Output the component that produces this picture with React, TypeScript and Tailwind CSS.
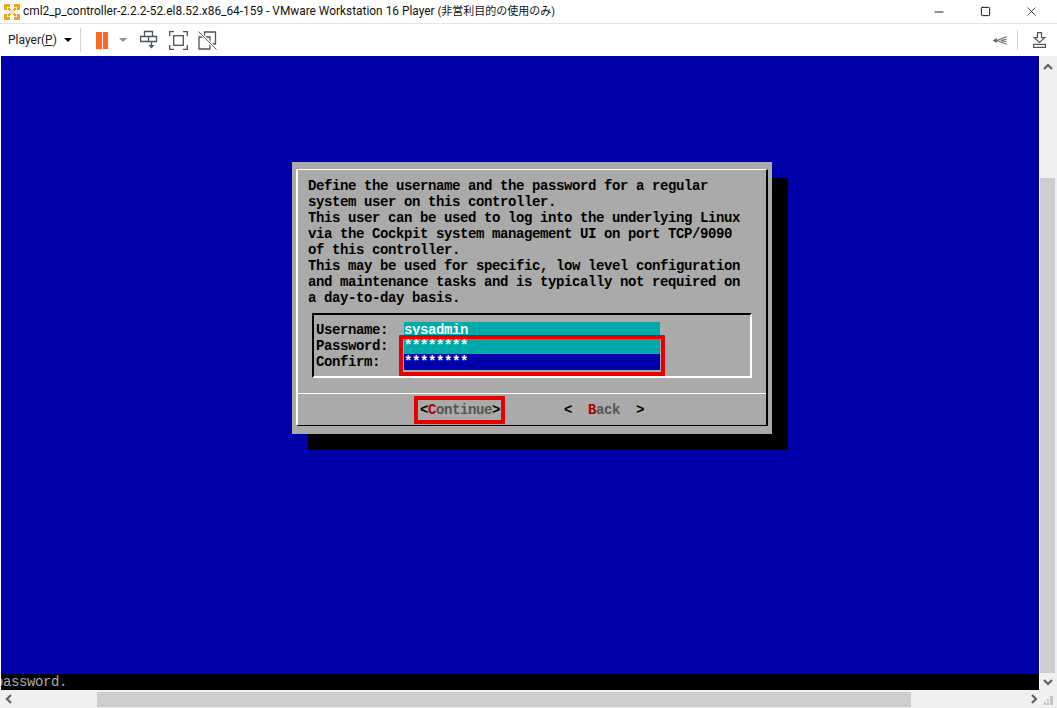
import { Minus, Square, X } from "lucide-react";

const mono = { fontFamily: '"Liberation Mono", "DejaVu Sans Mono", monospace' };
const ui = { fontFamily: 'Roboto, "Noto Sans CJK JP", sans-serif' };

const introLines = [
  "Define the username and the password for a regular",
  "system user on this controller.",
  "This user can be used to log into the underlying Linux",
  "via the Cockpit system management UI on port TCP/9090",
  "of this controller.",
  "This may be used for specific, low level configuration",
  "and maintenance tasks and is typically not required on",
  "a day-to-day basis.",
];

const VmwareLogo = () => (
  <svg width="16" height="16" viewBox="0 0 16 16" fill="none" stroke="#eea90f" strokeWidth="3">
    <path d="M1.500 6V1.500H6M10 1.500h4.500V6M14.500 10v4.500H10M6 14.500H1.500V10" />
    <path d="M4 4l3 3M12 4L9 7M12 12L9 9M4 12l3-3" stroke="#dc980e" strokeWidth="1.800" />
    <rect x="6" y="6" width="4" height="4" fill="#fbe3a0" stroke="none" />
  </svg>
);

const SendKeysIcon = () => (
  <svg width="18" height="20" viewBox="0 0 18 20" fill="none" stroke="#4a555c" strokeWidth="1.300">
    <path d="M4.500 6.500V1.500h8v5M.5 6.500h16v5H.5zM8.500 6.500v5" />
    <path d="M11.500 12v3" />
    <path d="M8.500 15h6l-3 3.500z" fill="#4a555c" stroke="none" />
  </svg>
);

const FullscreenIcon = () => (
  <svg width="19" height="19" viewBox="0 0 19 19" fill="none" stroke="#4a555c" strokeWidth="1.300">
    <path d="M.7 5V.7H5M14 .7h4.300V5M18.300 14v4.300H14M5 18.300H.7V14" />
    <rect x="4.700" y="4.700" width="9.600" height="9.600" />
  </svg>
);

const UnityIcon = () => (
  <svg width="19" height="19" viewBox="0 0 19 19" fill="none" stroke="#4a555c" strokeWidth="1.300">
    <path d="M6.500 5.500V1h11v12h-4M1 6h11v12H1z" />
    <path d="M.5.5l18 18" stroke="#fff" strokeWidth="3" />
    <path d="M.5.5l18 18" stroke="#59646a" strokeWidth="1" />
  </svg>
);

const CollapseIcon = () => (
  <svg width="15" height="9" viewBox="0 0 15 9" fill="none" stroke="#5f6b72" strokeWidth="1.100">
    <path d="M14.500.8L5 4.500l9.500 3.700M14.500 3.200L9 4.500l5.500 1.300" />
    <path d="M.5 4.500L5 2v5z" fill="#5f6b72" stroke="none" />
  </svg>
);

const DownloadIcon = () => (
  <svg width="13" height="16" viewBox="0 0 13 16" fill="none" stroke="#4a555c" strokeWidth="1.200">
    <path d="M4.500.6h4v5h3.300L6.500 10.500 1.200 5.600h3.300z" />
    <rect x=".6" y="12.400" width="11.800" height="3" />
  </svg>
);

const Chevron = ({ d }: { d: string }) => (
  <svg width="10" height="10" viewBox="0 0 10 10" fill="none" stroke="#606060" strokeWidth="2.200">
    <path d={d} />
  </svg>
);

const TitleBar = () => (
  <div className="flex h-[23px] items-center bg-white pl-[4px]">
    <VmwareLogo />
    <span className="ml-[3px] text-[11.900px] text-[#111]" style={ui}>
      cml2_p_controller-2.2.2-52.el8.52.x86_64-159 - VMware Workstation 16 Player <span className="text-[11px]">(非営利目的の使用のみ)</span>
    </span>
    <div className="ml-auto mr-[3px] flex items-center text-black">
      <div className="flex w-[46px] justify-center"><Minus size={14} strokeWidth={1.500} /></div>
      <div className="flex w-[46px] justify-center"><Square size={11} strokeWidth={2} /></div>
      <div className="flex w-[46px] justify-center"><X size={15} strokeWidth={1.100} /></div>
    </div>
  </div>
);

const Toolbar = () => (
  <div className="flex h-[33px] items-center border-t border-[#e4e4e4] bg-white">
    <span className="ml-[8px] w-[47px] whitespace-nowrap text-[12px] text-[#222]" style={ui}>
      Player(<span className="underline">P</span>)
    </span>
    <span className="ml-[9px] h-0 w-0 border-x-[4px] border-t-[4px] border-x-transparent border-t-black" />
    <span className="ml-[8px] h-[24px] w-px bg-[#d4d4d4]" />
    <span className="ml-[15px] h-[17px] w-[5.500px] bg-[#fd6a1f]" />
    <span className="ml-[1px] h-[17px] w-[5.500px] bg-[#fd6a1f]" />
    <span className="ml-[11px] h-0 w-0 border-x-[4px] border-t-[4px] border-x-transparent border-t-[#8f8f8f]" />
    <span className="ml-[13px] flex"><SendKeysIcon /></span>
    <span className="ml-[11px] flex"><FullscreenIcon /></span>
    <span className="ml-[10px] flex"><UnityIcon /></span>
    <span className="ml-auto flex"><CollapseIcon /></span>
    <span className="ml-[10px] h-[20px] w-px bg-[#d0d0d0]" />
    <span className="ml-[15px] mr-[11px] flex"><DownloadIcon /></span>
  </div>
);

const FieldRow = ({ label, value, bg }: { label: string; value: string; bg: string }) => (
  <div className="flex h-[16px]">
    <span className="w-[88px] text-black">{label}</span>
    <span className={`w-[256px] text-white ${bg}`}>{value}</span>
  </div>
);

const Dialog = () => (
  <div className="ml-[291px] mt-[106px] h-[272px] w-[480px] bg-[#aaaaaa] p-[4px] pt-[7px] shadow-[16px_16px_0_#000]">
    <div className="flex h-[257px] flex-col border-b-[1.500px] border-l-2 border-r-2 border-t-[1.500px] border-b-black border-l-white border-r-black border-t-white">
      <div className="flex-1 pl-[10px] pt-[8px]">
        {introLines.map((line) => (
          <div key={line} className="h-[16px] whitespace-pre text-black">{line}</div>
        ))}
        <div className="ml-[4px] mt-[7px] h-[65px] w-[440px] border-2 border-b-white border-l-black border-r-white border-t-black pl-[2px] pt-[7px]">
          <FieldRow label="Username:" value="sysadmin" bg="bg-[#00aaaa]" />
          <div className="relative">
            <FieldRow label="Password:" value="********" bg="bg-[#00aaaa]" />
            <FieldRow label="Confirm:" value="********" bg="bg-[#0000aa]" />
            <div className="absolute left-[83px] top-[-3px] h-[41px] w-[266px] rounded-[1px] border-4 border-[#e60000]" />
          </div>
        </div>
      </div>
      <div className="flex h-[32px] border-t-[1.500px] border-white pl-[122px] pt-[8px]">
        <span className="relative whitespace-pre text-black">
          {"<"}<span className="text-[#aa0000]">C</span><span className="text-[#555555]">ontinue</span>{">"}
          <span className="absolute -left-[6px] -top-[6px] h-[28px] w-[91px] rounded-[1px] border-4 border-[#e60000]" />
        </span>
        <span className="ml-[64px] whitespace-pre text-black">
          {"<  "}<span className="text-[#aa0000]">B</span><span className="text-[#555555]">ack</span>{"  >"}
        </span>
      </div>
    </div>
  </div>
);

const VmScreen = () => (
  <div className="flex min-w-0 flex-1 flex-col overflow-hidden border-x border-white text-[14px] font-bold leading-[16px] tracking-[-0.4px]" style={mono}>
    <div className="flex-1 bg-[#0000aa]">
      <Dialog />
    </div>
    <div className="h-[16px] whitespace-pre bg-black font-normal text-[#aaaaaa]">
      <div className="-ml-[6px]">password.</div>
    </div>
  </div>
);

const VScrollbar = () => (
  <div className="flex w-[17px] flex-col bg-[#f0f0f0] pr-[2px]">
    <div className="flex h-[17px] items-center justify-center pt-[4px]"><Chevron d="M1 7l4-4 4 4" /></div>
    <div className="mt-[105px] w-[15px] flex-1 bg-[#cdcdcd]" />
    <div className="flex h-[17px] items-center justify-center"><Chevron d="M1 3l4 4 4-4" /></div>
  </div>
);

const HScrollbar = () => (
  <div className="flex h-[18px] items-center bg-[#f0f0f0] pb-[1px] pt-px">
    <div className="flex w-[17px] justify-center"><Chevron d="M7 1L3 5l4 4" /></div>
    <div className="ml-[80px] h-[15px] w-[814px] bg-[#cdcdcd]" />
    <div className="ml-[114px] flex w-[17px] justify-center"><Chevron d="M3 1l4 4-4 4" /></div>
    <svg className="ml-auto mr-[4px] mt-[3px]" width="9" height="9" viewBox="0 0 9 9" fill="#c0c0c0">
      <path d="M6 0h3v3H6zM3 3h2v2H3zM6 3h3v3H6zM0 6h2v3H0zM3 6h2v3H3zM6 6h3v3H6z" />
    </svg>
  </div>
);

export default function App() {
  return (
    <div className="flex h-[708px] w-[1057px] flex-col overflow-hidden bg-white">
      <TitleBar />
      <Toolbar />
      <div className="flex min-h-0 flex-1">
        <VmScreen />
        <VScrollbar />
      </div>
      <HScrollbar />
    </div>
  );
}
